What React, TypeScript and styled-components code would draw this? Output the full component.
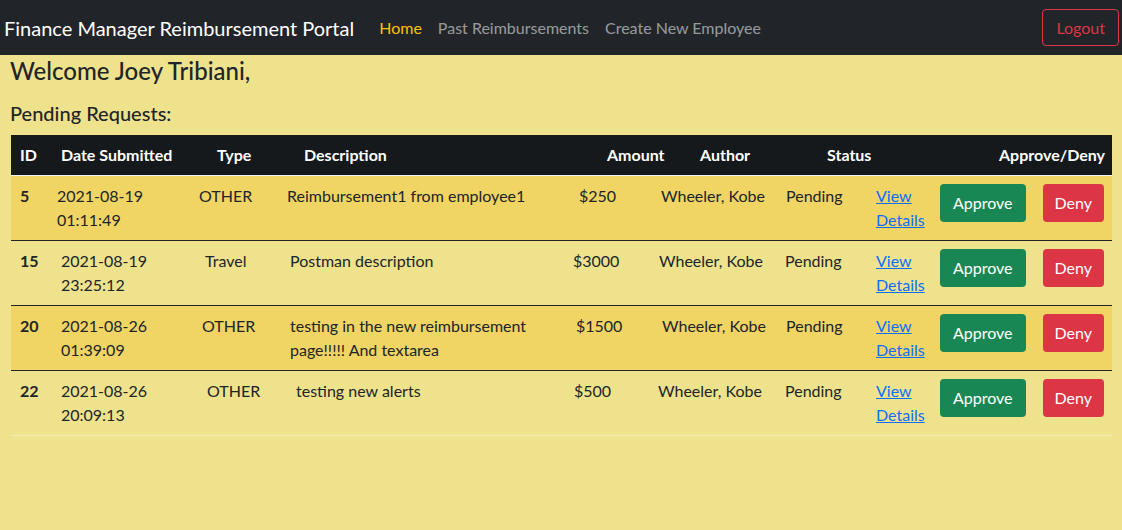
import React from "react";
import styled, { createGlobalStyle } from "styled-components";

const GlobalStyle = createGlobalStyle`
  body {
    margin: 0;
    background-color: #eee28c;
    font-family: "Lato", "Open Sans", sans-serif;
    font-size: 16px;
    line-height: 1.5;
    color: #212529;
  }
  * { box-sizing: border-box; }
`;

const Navbar = styled.nav`
  display: flex;
  align-items: center;
  height: 55px;
  padding: 0 3px 0 4px;
  background-color: #212529;
`;

const Brand = styled.span`
  font-size: 20px;
  color: #fff;
  margin-right: 17px;
  white-space: nowrap;
`;

const NavLinks = styled.div`
  display: flex;
  flex: 1;
`;

const NavLink = styled.a<{ $active?: boolean }>`
  padding: 8px;
  color: ${(p) => (p.$active ? "#ffc107" : "rgba(255, 255, 255, 0.55)")};
  text-decoration: none;
  cursor: pointer;
`;

const LogoutButton = styled.button`
  height: 37px;
  padding: 0 13px;
  font: inherit;
  color: #dc3545;
  background: transparent;
  border: 1px solid #dc3545;
  border-radius: 4px;
  cursor: pointer;
`;

const Main = styled.main`
  padding: 0 10px 0 11px;
`;

const Welcome = styled.h4`
  margin: 2px 0 0 -1px;
  font-size: 24px;
  font-weight: 500;
  line-height: 1.2;
`;

const Subtitle = styled.h5`
  margin: 15px 0 10px -1px;
  font-size: 20px;
  font-weight: 500;
  line-height: 1.2;
`;

const Table = styled.div`
  width: 1101px;
`;

const HeaderRow = styled.div<{ $cols: string }>`
  display: grid;
  grid-template-columns: ${(p) => p.$cols};
  padding: 8px 7px 8px 9px;
  background-color: #16191c;
  color: #fff;
  font-weight: 700;
  border-bottom: 1px solid #f2f2f2;
`;

const HeadCell = styled.span<{ $right?: boolean }>`
  text-align: ${(p) => (p.$right ? "right" : "left")};
`;

const Row = styled.div<{ $cols: string; $striped?: boolean; $last?: boolean }>`
  display: grid;
  grid-template-columns: ${(p) => p.$cols};
  align-items: start;
  padding: 8px 8px 8px 9px;
  background-color: ${(p) => (p.$striped ? "#f0d464" : "transparent")};
  border-bottom: 1px solid ${(p) => (p.$last ? "#f4ecb4" : "#212529")};
`;

const Cell = styled.span`
  min-width: 0;
`;

const IdCell = styled(Cell)`
  font-weight: 700;
`;

const DateCell = styled(Cell)`
  max-width: 96px;
`;

const DescCell = styled(Cell)`
  max-width: 262px;
`;

const DetailsLink = styled.a`
  color: #0d6efd;
  text-decoration: underline;
  max-width: 56px;
  cursor: pointer;
`;

const ActionButton = styled.button<{ $variant: "approve" | "deny" }>`
  height: 38px;
  padding: 0 ${(p) => (p.$variant === "approve" ? "13px" : "12px")};
  font: inherit;
  color: #fff;
  border: none;
  border-radius: 4px;
  background-color: ${(p) => (p.$variant === "approve" ? "#198754" : "#dc3545")};
  justify-self: ${(p) => (p.$variant === "deny" ? "end" : "start")};
  cursor: pointer;
`;

type Request = {
  id: number;
  date: string;
  type: string;
  description: string;
  amount: number;
  cols: number[];
};

const requests: Request[] = [
  { id: 5, date: "2021-08-19 01:11:49", type: "OTHER", description: "Reimbursement1 from employee1", amount: 250, cols: [37, 142, 88, 292, 82, 125, 90, 64] },
  { id: 15, date: "2021-08-19 23:25:12", type: "Travel", description: "Postman description", amount: 3000, cols: [41, 144, 85, 283, 86, 126, 91, 64] },
  { id: 20, date: "2021-08-26 01:39:09", type: "OTHER", description: "testing in the new reimbursement page!!!!! And textarea", amount: 1500, cols: [41, 141, 88, 286, 86, 124, 90, 64] },
  { id: 22, date: "2021-08-26 20:09:13", type: "OTHER", description: "testing new alerts", amount: 500, cols: [41, 146, 89, 278, 84, 127, 91, 64] },
];

const toTemplate = (cols: number[]) => `${cols.map((c) => `${c}px`).join(" ")} 1fr auto`;

const App = () => {
  return (
    <>
      <GlobalStyle />
      <Navbar>
        <Brand>Finance Manager Reimbursement Portal</Brand>
        <NavLinks>
          <NavLink $active>Home</NavLink>
          <NavLink>Past Reimbursements</NavLink>
          <NavLink>Create New Employee</NavLink>
        </NavLinks>
        <LogoutButton>Logout</LogoutButton>
      </Navbar>
      <Main>
        <Welcome>Welcome Joey Tribiani,</Welcome>
        <Subtitle>Pending Requests:</Subtitle>
        <Table>
          <HeaderRow $cols="41px 156px 87px 303px 93px 127px 1fr auto">
            <HeadCell>ID</HeadCell>
            <HeadCell>Date Submitted</HeadCell>
            <HeadCell>Type</HeadCell>
            <HeadCell>Description</HeadCell>
            <HeadCell>Amount</HeadCell>
            <HeadCell>Author</HeadCell>
            <HeadCell>Status</HeadCell>
            <HeadCell $right>Approve/Deny</HeadCell>
          </HeaderRow>
          {requests.map((r, i) => (
            <Row key={r.id} $cols={toTemplate(r.cols)} $striped={i % 2 === 0} $last={i === requests.length - 1}>
              <IdCell>{r.id}</IdCell>
              <DateCell>{r.date}</DateCell>
              <Cell>{r.type}</Cell>
              <DescCell>{r.description}</DescCell>
              <Cell>${r.amount}</Cell>
              <Cell>Wheeler, Kobe</Cell>
              <Cell>Pending</Cell>
              <DetailsLink>View Details</DetailsLink>
              <ActionButton $variant="approve">Approve</ActionButton>
              <ActionButton $variant="deny">Deny</ActionButton>
            </Row>
          ))}
        </Table>
      </Main>
    </>
  );
};

export default App;
